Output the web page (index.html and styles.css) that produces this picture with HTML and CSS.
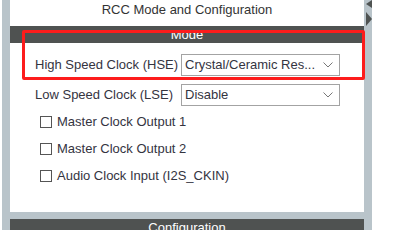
FILE: index.html
```html
<!DOCTYPE html>
<html lang="en">
<head>
    <meta charset="UTF-8">
    <title>RCC Mode and Configuration</title>
    <link rel="stylesheet" href="styles.css">
</head>
<body>
    <div class="app">
        <div class="rail_left"></div>
        <div class="panel">
            <div class="title">RCC Mode and Configuration</div>
            <div class="section_head">Mode</div>
            <div class="section_body">
                <div class="field">
                    <span class="label">High Speed Clock (HSE)</span>
                    <div class="select">
                        <span>Crystal/Ceramic Res...</span>
                        <svg class="chev" width="10" height="6" viewBox="0 0 10 6"><path d="M0.5 0.5 L5 5 L9.5 0.5" fill="none" stroke="#777" stroke-width="1"/></svg>
                    </div>
                </div>
                <div class="field">
                    <span class="label">Low Speed Clock (LSE)</span>
                    <div class="select">
                        <span>Disable</span>
                        <svg class="chev" width="10" height="6" viewBox="0 0 10 6"><path d="M0.5 0.5 L5 5 L9.5 0.5" fill="none" stroke="#777" stroke-width="1"/></svg>
                    </div>
                </div>
                <div class="check"><span class="box"></span>Master Clock Output 1</div>
                <div class="check"><span class="box"></span>Master Clock Output 2</div>
                <div class="check"><span class="box"></span>Audio Clock Input (I2S_CKIN)</div>
            </div>
            <div class="section_head">Configuration</div>
        </div>
        <div class="rail_right">
            <svg width="8" height="28" viewBox="0 0 8 28">
                <path d="M7 0 L7 8 L1 4 Z" fill="#4f5352"/>
                <path d="M1 12 L7 19 L1 26 Z" fill="#4f5352"/>
            </svg>
        </div>
        <div class="highlight"></div>
    </div>
</body>
</html>
```

FILE: styles.css
```css
* {
    margin: 0;
    padding: 0;
    box-sizing: border-box;
}

body {
    background-color: #fff;
    font-family: "Liberation Sans", Arial, sans-serif;
    font-size: 13px;
    color: #34343f;
}

.app {
    position: relative;
    display: flex;
    margin-left: 2px;
    height: 230px;
    width: 370px;
    background-color: #b9c4ca;
    overflow: hidden;
}

.rail_left {
    width: 8px;
}

.panel {
    width: 354px;
    display: flex;
    flex-direction: column;
}

.panel > div {
    flex-shrink: 0;
}

.title {
    height: 26px;
    background-color: #fff;
    text-align: center;
    line-height: 20px;
    color: #333;
}

.section_head {
    height: 17px;
    background-color: #4f5251;
    color: #fff;
    text-align: center;
    line-height: 17px;
}

.section_body {
    height: 169px;
    margin-bottom: 7px;
    background-color: #fff;
    padding: 10px 0 0 25px;
}

.field {
    display: flex;
    align-items: center;
    height: 23px;
    margin-bottom: 7px;
}

.field + .field {
    margin-bottom: 2px;
}

.label {
    width: 146px;
}

.select {
    width: 159px;
    height: 22px;
    border: 1px solid #a3a3a3;
    display: flex;
    align-items: center;
    justify-content: space-between;
    padding: 0 6px 0 3px;
    white-space: nowrap;
}

.chev {
    display: block;
}

.check {
    display: flex;
    align-items: center;
    height: 27px;
    padding-left: 5px;
}

.box {
    width: 12px;
    height: 12px;
    border: 1px solid #555;
    margin-right: 5px;
}

.rail_right {
    width: 8px;
    padding-left: 1px;
}

.rail_right svg {
    display: block;
}

.highlight {
    position: absolute;
    left: 20px;
    top: 30px;
    width: 343px;
    height: 50px;
    border: 3px solid #fd1c1c;
    border-radius: 2px;
}
```
